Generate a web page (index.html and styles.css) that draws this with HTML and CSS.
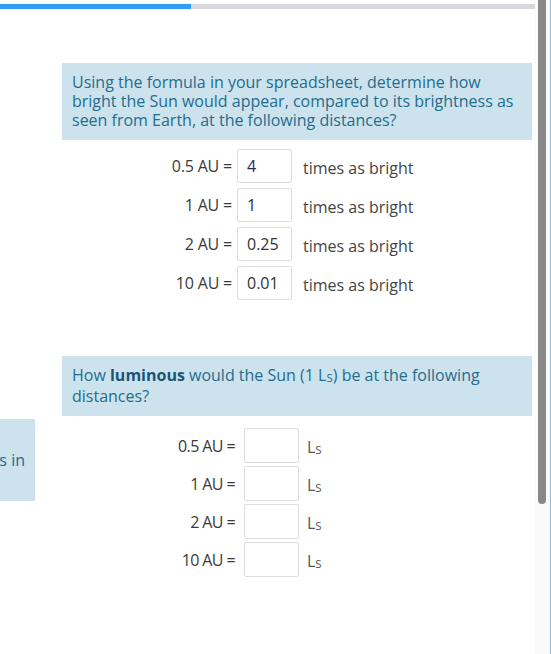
FILE: index.html
```html
<!DOCTYPE html>
<html lang="en">
<head>
    <meta charset="UTF-8">
    <meta name="viewport" content="width=device-width, initial-scale=1.0">
    <title>Brightness and Luminosity</title>
    <link rel="stylesheet" href="styles.css">
</head>
<body>
    <div class="page">
        <!-- Progress through the lesson -->
        <div class="progress">
            <div class="progressFill"></div>
        </div>

        <!-- Question 1: apparent brightness -->
        <div class="question firstQuestion">
            Using the formula in your spreadsheet, determine how bright the Sun would appear, compared to its brightness as seen from Earth, at the following distances?
        </div>
        <div class="answers">
            <div class="row">
                <span class="label">0.5 AU =</span>
                <input type="text" class="answerField filled" value="4">
                <span class="unit">times as bright</span>
            </div>
            <div class="row">
                <span class="label">1 AU =</span>
                <input type="text" class="answerField filled" value="1">
                <span class="unit">times as bright</span>
            </div>
            <div class="row">
                <span class="label">2 AU =</span>
                <input type="text" class="answerField" value="0.25">
                <span class="unit">times as bright</span>
            </div>
            <div class="row">
                <span class="label">10 AU =</span>
                <input type="text" class="answerField" value="0.01">
                <span class="unit">times as bright</span>
            </div>
        </div>

        <!-- Question 2: luminosity -->
        <div class="question secondQuestion">
            How <b>luminous</b> would the Sun (1 L<span class="subS">S</span>) be at the following distances?
        </div>
        <div class="lower">
            <div class="peek">s in</div>
            <div class="answers lumAnswers">
                <div class="row lumRow">
                    <span class="label lumLabel">0.5 AU =</span>
                    <input type="text" class="answerField lumField">
                    <span class="unit lumUnit">L<span class="subS">S</span></span>
                </div>
                <div class="row lumRow">
                    <span class="label lumLabel">1 AU =</span>
                    <input type="text" class="answerField lumField">
                    <span class="unit lumUnit">L<span class="subS">S</span></span>
                </div>
                <div class="row lumRow">
                    <span class="label lumLabel">2 AU =</span>
                    <input type="text" class="answerField lumField">
                    <span class="unit lumUnit">L<span class="subS">S</span></span>
                </div>
                <div class="row lumRow">
                    <span class="label lumLabel">10 AU =</span>
                    <input type="text" class="answerField lumField">
                    <span class="unit lumUnit">L<span class="subS">S</span></span>
                </div>
            </div>
        </div>
    </div>

    <!-- Scroll track on the right -->
    <div class="scrollTrack">
        <div class="scrollThumb"></div>
    </div>
</body>
</html>
```

FILE: styles.css
```css
/* Page frame */
body {
    margin: 0;
    height: 654px;
    overflow: hidden;
    display: flex;
    background-color: #ffffff;
    font-family: "Open Sans", "Liberation Sans", sans-serif;
    color: #333333;
}

.page {
    width: 535px;
    flex-shrink: 0;
}

/* Progress bar */
.progress {
    margin-top: 4px;
    height: 5px;
    background-color: #d8d8dc;
}

.progressFill {
    width: 191px;
    height: 100%;
    background-color: #2f9ef4;
}

/* Question boxes */
.question {
    margin-left: 62px;
    width: 450px;
    padding: 10px;
    background-color: #cce3ed;
    color: #256c8f;
    font-size: 16px;
    line-height: 19px;
}

.question b {
    color: #1b5375;
}

.firstQuestion {
    margin-top: 54px;
}

.secondQuestion {
    margin-top: 56px;
}

.subS {
    font-size: 0.72em;
    vertical-align: -1px;
}

/* Answer rows */
.answers {
    margin-top: 9px;
    margin-left: 62px;
    display: flex;
    flex-direction: column;
    gap: 5px;
}

.row {
    display: flex;
    align-items: center;
    height: 34px;
}

.label {
    width: 170px;
    text-align: right;
    font-size: 16px;
    letter-spacing: -0.2px;
    color: #3a3a3a;
}

.answerField {
    box-sizing: border-box;
    margin-left: 5px;
    width: 55px;
    height: 34px;
    padding: 0 9px;
    border: 1px solid #dddddd;
    border-radius: 2px;
    font-family: "Open Sans", "Liberation Sans", sans-serif;
    font-size: 16px;
    color: #333333;
    outline: none;
}

.filled {
    color: #1f2a5c;
}

.unit {
    margin-left: 11px;
    padding-top: 3px;
    font-size: 16px;
    color: #444444;
}

/* Lower section with the neighbouring card peeking in */
.lower {
    display: flex;
}

.peek {
    margin-top: 3px;
    width: 25px;
    height: 82px;
    padding-right: 10px;
    display: flex;
    align-items: center;
    justify-content: flex-end;
    background-color: #cce3ed;
    color: #256c8f;
    font-size: 16px;
    white-space: nowrap;
    overflow: hidden;
}

.lumAnswers {
    margin-top: 12px;
    margin-left: 27px;
    gap: 3px;
}

.lumRow {
    height: 35px;
}

.lumLabel {
    width: 173px;
    font-size: 16px;
    letter-spacing: -0.6px;
}

.lumField {
    margin-left: 9px;
    height: 35px;
}

.lumUnit {
    margin-left: 8px;
    font-size: 16px;
    color: #555555;
}

/* Scroll track */
.scrollTrack {
    width: 15px;
    height: 654px;
    background-color: #fafafa;
    border-right: 1px solid #8fb8d0;
}

.scrollThumb {
    margin-left: 3px;
    width: 8px;
    height: 504px;
    background-color: #888888;
    border-radius: 0 0 4px 4px;
}
```
